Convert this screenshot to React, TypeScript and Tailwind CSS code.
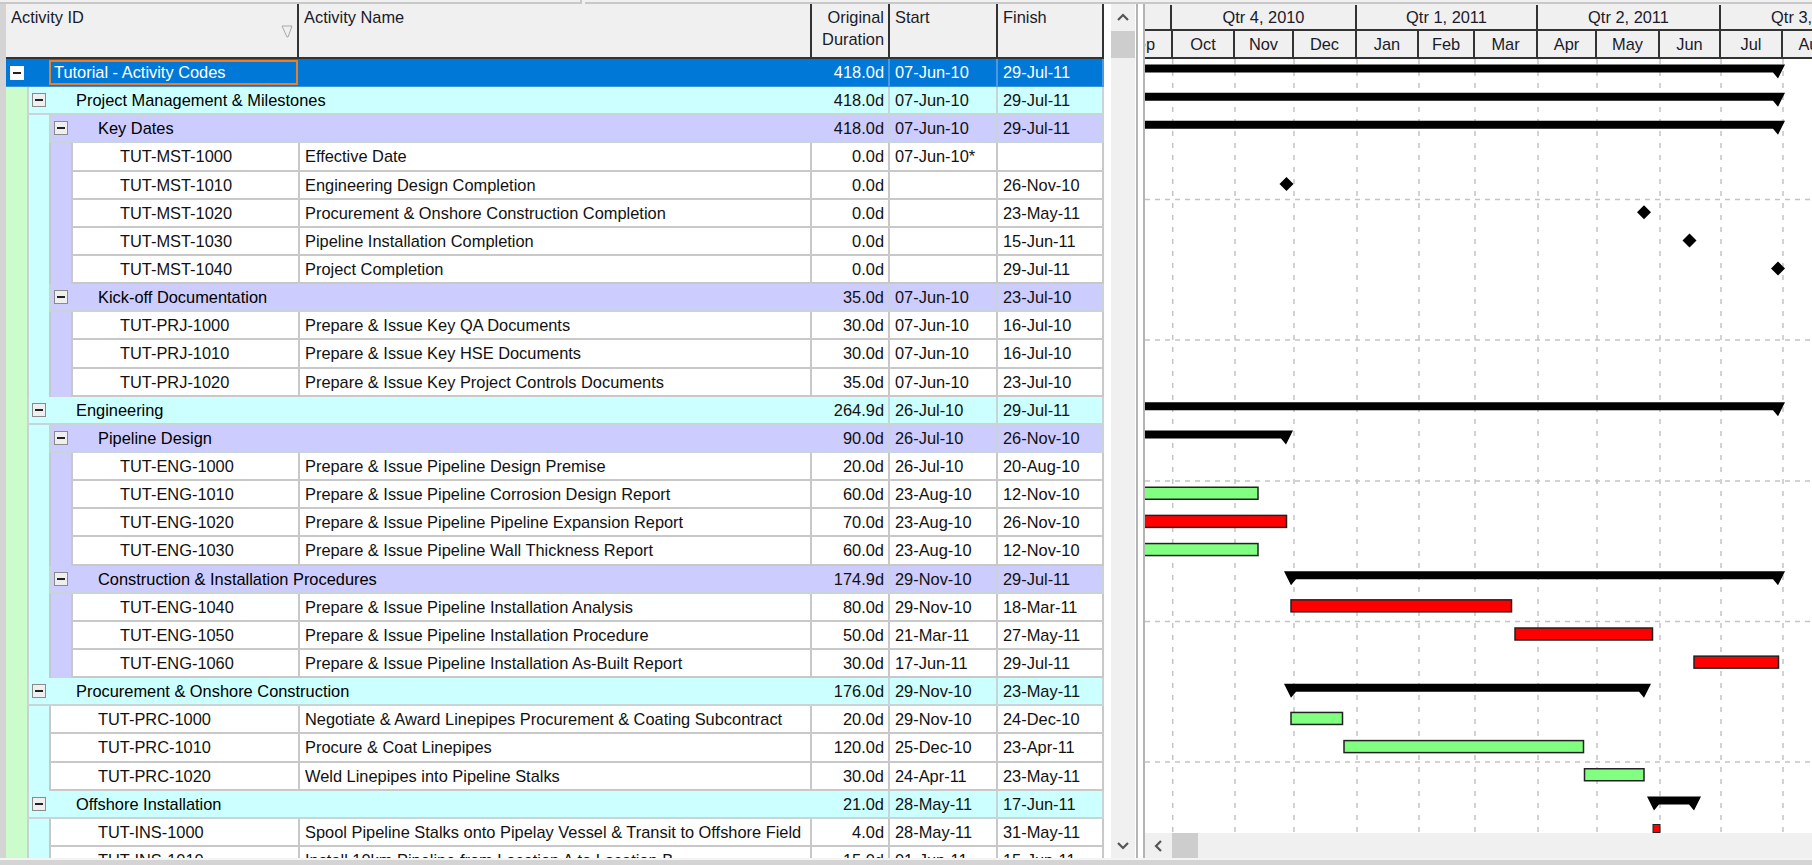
import React from "react";

type Row = [number, string, string, string, string, string];

// level: 0 project, 1 wbs, 2 sub wbs, 3 activity under sub wbs, 4 activity under wbs
const rows: Row[] = [
  [0, "Tutorial - Activity Codes", "", "418.0d", "07-Jun-10", "29-Jul-11"],
  [1, "Project Management & Milestones", "", "418.0d", "07-Jun-10", "29-Jul-11"],
  [2, "Key Dates", "", "418.0d", "07-Jun-10", "29-Jul-11"],
  [3, "TUT-MST-1000", "Effective Date", "0.0d", "07-Jun-10*", ""],
  [3, "TUT-MST-1010", "Engineering Design Completion", "0.0d", "", "26-Nov-10"],
  [3, "TUT-MST-1020", "Procurement & Onshore Construction Completion", "0.0d", "", "23-May-11"],
  [3, "TUT-MST-1030", "Pipeline Installation Completion", "0.0d", "", "15-Jun-11"],
  [3, "TUT-MST-1040", "Project Completion", "0.0d", "", "29-Jul-11"],
  [2, "Kick-off Documentation", "", "35.0d", "07-Jun-10", "23-Jul-10"],
  [3, "TUT-PRJ-1000", "Prepare & Issue Key QA Documents", "30.0d", "07-Jun-10", "16-Jul-10"],
  [3, "TUT-PRJ-1010", "Prepare & Issue Key HSE Documents", "30.0d", "07-Jun-10", "16-Jul-10"],
  [3, "TUT-PRJ-1020", "Prepare & Issue Key Project Controls Documents", "35.0d", "07-Jun-10", "23-Jul-10"],
  [1, "Engineering", "", "264.9d", "26-Jul-10", "29-Jul-11"],
  [2, "Pipeline Design", "", "90.0d", "26-Jul-10", "26-Nov-10"],
  [3, "TUT-ENG-1000", "Prepare & Issue Pipeline Design Premise", "20.0d", "26-Jul-10", "20-Aug-10"],
  [3, "TUT-ENG-1010", "Prepare & Issue Pipeline Corrosion Design Report", "60.0d", "23-Aug-10", "12-Nov-10"],
  [3, "TUT-ENG-1020", "Prepare & Issue Pipeline Pipeline Expansion Report", "70.0d", "23-Aug-10", "26-Nov-10"],
  [3, "TUT-ENG-1030", "Prepare & Issue Pipeline Wall Thickness Report", "60.0d", "23-Aug-10", "12-Nov-10"],
  [2, "Construction & Installation Procedures", "", "174.9d", "29-Nov-10", "29-Jul-11"],
  [3, "TUT-ENG-1040", "Prepare & Issue Pipeline Installation Analysis", "80.0d", "29-Nov-10", "18-Mar-11"],
  [3, "TUT-ENG-1050", "Prepare & Issue Pipeline Installation Procedure", "50.0d", "21-Mar-11", "27-May-11"],
  [3, "TUT-ENG-1060", "Prepare & Issue Pipeline Installation As-Built Report", "30.0d", "17-Jun-11", "29-Jul-11"],
  [1, "Procurement & Onshore Construction", "", "176.0d", "29-Nov-10", "23-May-11"],
  [4, "TUT-PRC-1000", "Negotiate & Award Linepipes Procurement & Coating Subcontract", "20.0d", "29-Nov-10", "24-Dec-10"],
  [4, "TUT-PRC-1010", "Procure & Coat Linepipes", "120.0d", "25-Dec-10", "23-Apr-11"],
  [4, "TUT-PRC-1020", "Weld Linepipes into Pipeline Stalks", "30.0d", "24-Apr-11", "23-May-11"],
  [1, "Offshore Installation", "", "21.0d", "28-May-11", "17-Jun-11"],
  [4, "TUT-INS-1000", "Spool Pipeline Stalks onto Pipelay Vessel & Transit to Offshore Field", "4.0d", "28-May-11", "31-May-11"],
  [4, "TUT-INS-1010", "Install 10km Pipeline from Location A to Location B", "15.0d", "01-Jun-11", "15-Jun-11"],
];

const monthLines = [1172.7, 1235, 1294, 1357, 1419, 1475, 1538, 1597, 1660, 1721, 1783];
const hLines = [199.5, 340, 481, 621.5, 762];

const rowTop = (i: number) => 59 + i * 28.15;

// [row, x1, x2]
const summaries: [number, number, number][] = [
  [0, 1145, 1785],
  [1, 1145, 1785],
  [2, 1145, 1785],
  [12, 1145, 1785],
  [13, 1145, 1293],
  [18, 1284, 1785],
  [22, 1284, 1651],
  [26, 1647, 1701],
];

// [row, x1, x2, colour]
const bars: [number, number, number, string][] = [
  [15, 1140, 1258, "#80ff80"],
  [16, 1140, 1286.5, "#ff0000"],
  [17, 1140, 1258, "#80ff80"],
  [19, 1291, 1511.5, "#ff0000"],
  [20, 1515, 1652.5, "#ff0000"],
  [21, 1694, 1778.5, "#ff0000"],
  [23, 1291, 1342.5, "#80ff80"],
  [24, 1344, 1583.5, "#80ff80"],
  [25, 1584.5, 1644, "#80ff80"],
];

const milestones: [number, number][] = [
  [4, 1286.5],
  [5, 1644],
  [6, 1689.5],
  [7, 1778],
];

function summaryPath(i: number, x1: number, x2: number) {
  const y = rowTop(i) + 5.5;
  const left =
    x1 > 1145
      ? `L${x1 + 12} ${y + 8} L${x1 + 7} ${y + 14} L${x1} ${y}`
      : `L${x1} ${y + 8} L${x1} ${y}`;
  return `M${x1} ${y} L${x2} ${y} L${x2 - 7} ${y + 14} L${x2 - 12} ${y + 8} ${left} Z`;
}

function Toggle({ selected }: { selected?: boolean }) {
  return (
    <div
      className={
        selected
          ? "w-[14px] h-[14px] bg-white flex items-center justify-center"
          : "w-[14px] h-[14px] bg-[#efefef] border border-[#8a8a8a] flex items-center justify-center"
      }
    >
      <div className="w-[8px] h-[2px] bg-[#222]" />
    </div>
  );
}

function DataCells({ row, line }: { row: Row; line: string }) {
  return (
    <>
      <div className={`w-[78px] shrink-0 pr-[4px] text-right border-r-2 ${line}`}>{row[3]}</div>
      <div className={`w-[108px] shrink-0 pl-[5px] border-r-2 ${line}`}>{row[4]}</div>
      <div className={`w-[106px] shrink-0 pl-[5px] border-r-2 ${line}`}>{row[5]}</div>
    </>
  );
}

function TableRow({ row }: { row: Row }) {
  const level = row[0];
  if (level === 0) {
    return (
      <div className="flex items-stretch h-[28.15px] shrink-0 bg-[#0078d7] text-white leading-[26px] border-b border-[#3d94dc]">
        <div className="w-[43px] shrink-0 pl-[4px] flex items-center">
          <Toggle selected />
        </div>
        <div className="w-[763px] shrink-0 flex items-center">
          <div className="w-[249px] h-[25px] border-2 border-[#e8802a] pl-[3px] leading-[21px]">{row[1]}</div>
        </div>
        <DataCells row={row} line="border-[#4a9ae0]" />
      </div>
    );
  }
  if (level === 1 || level === 2) {
    const isWbs = level === 1;
    return (
      <div className={`flex items-stretch h-[28.15px] shrink-0 leading-[26px] ${isWbs ? "bg-[#ccffff]" : "bg-[#ccccff]"}`}>
        <div className="w-[21px] shrink-0 bg-[#ccfccc]" />
        {!isWbs && <div className="w-[22px] shrink-0 bg-[#ccffff] border-l-2 border-[#c4d4d4]" />}
        <div className="flex grow items-stretch border-b-2 border-l-2 border-[#c8d4d8]">
          <div className="w-[22px] shrink-0 flex items-center pl-[3px]">
            <Toggle />
          </div>
          <div className={`shrink-0 text-black pl-[25px] ${isWbs ? "w-[761px]" : "w-[739px]"}`}>{row[1]}</div>
          <DataCells row={row} line="border-[#c8d4d8]" />
        </div>
      </div>
    );
  }
  const under = level === 3;
  return (
    <div className="flex items-stretch h-[28.15px] shrink-0 leading-[26px]">
      <div className="w-[21px] shrink-0 bg-[#ccfccc]" />
      <div className="w-[22px] shrink-0 bg-[#ccffff] border-l-2 border-[#c4d4d4]" />
      {under && <div className="w-[22px] shrink-0 bg-[#ccccff] border-l-2 border-[#c4c8d0]" />}
      <div className="flex grow items-stretch bg-white border-b-2 border-l-2 border-[#c8c8c8]">
        <div className={`shrink-0 pl-[47px] border-r-2 border-[#c8c8c8] ${under ? "w-[227px]" : "w-[249px]"}`}>{row[1]}</div>
        <div className="w-[512px] shrink-0 pl-[5px] border-r-2 border-[#c8c8c8] whitespace-nowrap">{row[2]}</div>
        <DataCells row={row} line="border-[#c8c8c8]" />
      </div>
    </div>
  );
}

function Chevron({ dir }: { dir: "up" | "down" | "left" }) {
  const pts = dir === "up" ? "2,9 7,4 12,9" : dir === "down" ? "2,5 7,10 12,5" : "9,2 4,7 9,12";
  return (
    <svg width="14" height="14" viewBox="0 0 14 14">
      <polyline points={pts} fill="none" stroke="#555" strokeWidth="2.2" />
    </svg>
  );
}

const headCell = "shrink-0 border-r-2 border-[#333] pt-[2px] leading-[22px]";
const ganttCell = "shrink-0 border-r-2 border-[#333] flex items-center justify-center overflow-hidden";

const quarters: [string, string][] = [
  ["", "w-[27px]"],
  ["Qtr 4, 2010", "w-[185px]"],
  ["Qtr 1, 2011", "w-[181px]"],
  ["Qtr 2, 2011", "w-[183px]"],
  ["Qtr 3, 2011", "w-[183px]"],
];

const months: [string, string][] = [
  ["Sep", "w-[63px] ml-[-35px]"],
  ["Oct", "w-[62px]"],
  ["Nov", "w-[59px]"],
  ["Dec", "w-[63px]"],
  ["Jan", "w-[62px]"],
  ["Feb", "w-[56px]"],
  ["Mar", "w-[63px]"],
  ["Apr", "w-[59px]"],
  ["May", "w-[63px]"],
  ["Jun", "w-[61px]"],
  ["Jul", "w-[62px]"],
  ["Aug", "w-[62px]"],
];

export default function App() {
  return (
    <div className="w-[1812px] h-[865px] overflow-hidden flex flex-col bg-[#d4d4d4] text-[16.4px] text-[#111] font-['Liberation_Sans',sans-serif]">
      <div className="h-[4px] shrink-0 flex bg-[#f0f0f0]">
        <div className="w-[582px] border-b-2 border-r-2 border-[#c8c8c8]" />
        <div className="grow ml-[3px] border-b-2 border-[#c8c8c8]" />
      </div>
      <div className="flex h-[854px] shrink-0 pl-[6px]">
        {/* table */}
        <div className="w-[1098px] shrink-0 flex flex-col overflow-hidden bg-white">
          <div className="flex h-[55px] shrink-0 bg-[#f0f0f0] border-b-2 border-[#333] text-[#1a1a2a]">
            <div className={`${headCell} w-[293px] pl-[5px] relative`}>
              Activity ID
              <svg className="absolute right-[4px] top-[21px]" width="12" height="13" viewBox="0 0 12 13">
                <path d="M1 1 L11 1 L7 12 L6 12 Z" fill="none" stroke="#a8a8a8" strokeWidth="1" />
              </svg>
            </div>
            <div className={`${headCell} w-[513px] pl-[5px]`}>Activity Name</div>
            <div className={`${headCell} w-[78px] pr-[4px] text-right`}>
              Original
              <br />
              Duration
            </div>
            <div className={`${headCell} w-[108px] pl-[5px]`}>Start</div>
            <div className={`${headCell} w-[106px] pl-[5px]`}>Finish</div>
          </div>
          {rows.map((r, i) => (
            <TableRow key={i} row={r} />
          ))}
        </div>

        {/* vertical scrollbar */}
        <div className="w-[7px] shrink-0 bg-white" />
        <div className="w-[24px] shrink-0 bg-[#f0f0f0] flex flex-col items-center">
          <div className="h-[27px] flex items-center">
            <Chevron dir="up" />
          </div>
          <div className="w-full h-[27px] bg-[#cdcdcd]" />
          <div className="grow" />
          <div className="h-[26px] flex items-center">
            <Chevron dir="down" />
          </div>
        </div>

        {/* splitter */}
        <div className="w-[1px] shrink-0 bg-white" />
        <div className="w-[9px] shrink-0 bg-white border-l-2 border-r-2 border-[#b4b4b4]" />

        {/* gantt */}
        <div className="grow min-w-0 flex flex-col bg-white">
          <div className="h-[27px] shrink-0 flex overflow-hidden bg-[#f0f0f0] border-b-2 border-[#333] text-[#1a1a2a] pt-[1px]">
            {quarters.map(([q, w], i) => (
              <div key={i} className={`${ganttCell} ${w}`}>
                <span className="whitespace-nowrap">{q}</span>
              </div>
            ))}
          </div>
          <div className="h-[28px] shrink-0 flex overflow-hidden bg-[#f0f0f0] border-b-2 border-[#333] text-[#1a1a2a]">
            {months.map(([m, w]) => (
              <div key={m} className={`${ganttCell} ${w}`}>
                {m}
              </div>
            ))}
          </div>
          <svg width="667" height="774" viewBox="1145 59 667 774" className="block shrink-0">
            {monthLines.map((x) => (
              <line key={x} x1={x} x2={x} y1={59} y2={833} stroke="#c4c4c4" strokeWidth="1.5" strokeDasharray="5 7" />
            ))}
            {hLines.map((y) => (
              <line key={y} x1={1145} x2={1812} y1={y} y2={y} stroke="#c4c4c4" strokeWidth="1.5" strokeDasharray="5 5" />
            ))}
            {summaries.map(([i, a, b]) => (
              <path key={i} d={summaryPath(i, a, b)} fill="#000" />
            ))}
            {bars.map(([i, a, b, c]) => (
              <rect key={i} x={a} y={rowTop(i) + 6} width={b - a} height={12} fill={c} stroke="#222" strokeWidth="1.5" />
            ))}
            <rect x={1653} y={824.5} width={7} height={8} fill="#ff0000" stroke="#222" strokeWidth="1" />
            {milestones.map(([i, x]) => {
              const y = rowTop(i) + 12.5;
              return <polygon key={i} points={`${x},${y - 7} ${x + 7},${y} ${x},${y + 7} ${x - 7},${y}`} fill="#000" />;
            })}
          </svg>
          <div className="h-[25px] shrink-0 bg-[#f0f0f0] flex items-center">
            <div className="w-[27px] flex justify-center">
              <Chevron dir="left" />
            </div>
            <div className="w-[26px] h-full bg-[#cdcdcd]" />
          </div>
        </div>
      </div>
      <div className="h-[2px] shrink-0 bg-[#f4f4f4]" />
    </div>
  );
}
